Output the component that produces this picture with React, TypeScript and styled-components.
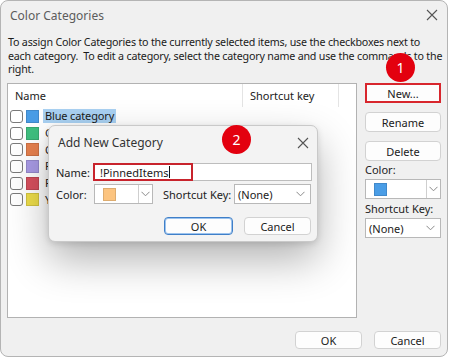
import React from 'react'
import styled, { createGlobalStyle } from 'styled-components'

const red = '#e3000f'
const ui = '"Noto Sans", "Open Sans", sans-serif'

const GlobalStyle = createGlobalStyle`
  html, body { margin: 0; padding: 0; background: #ffffff; }
  * { box-sizing: border-box; }
  body { font-family: ${ui}; font-size: 11px; color: #1b1b1b; }
`

const Window = styled.div`
  position: relative;
  width: 448px;
  height: 357px;
  border: 1px solid #b4b4b4;
  border-radius: 8px;
  background: #f0f0f0;
  display: flex;
  flex-direction: column;
  padding: 0 6px 7px 6px;
  overflow: hidden;
`
const TitleBar = styled.div`
  height: 30px;
  display: flex;
  align-items: center;
  justify-content: space-between;
  padding: 0 3px 2px 3px;
`
const Title = styled.span`
  font-size: 12px;
  color: #5c5c5c;
`
const Description = styled.p`
  margin: 5px 0 0 1px;
  line-height: 13.5px;
  height: 40.5px;
  white-space: pre;
  font-size: 10.7px;
  letter-spacing: -0.2px;
`
const Body = styled.div`
  margin-top: 6.5px;
  height: 235px;
  display: flex;
  gap: 8px;
`
const ListBox = styled.div`
  width: 350px;
  border: 1px solid #b2b2b2;
  background: #ffffff;
  display: flex;
  flex-direction: column;
`
const HeaderRow = styled.div`
  height: 23px;
  display: flex;
`
const HeaderCell = styled.div<{ $w?: number }>`
  width: ${p => (p.$w ? `${p.$w}px` : 'auto')};
  flex: ${p => (p.$w ? 'none' : '1')};
  padding-left: 7px;
  display: flex;
  align-items: center;
  border-right: ${p => (p.$w ? '1px solid #e4e4e4' : 'none')};
  color: #222;
`
const Rows = styled.div`
  padding: 1px 0 0 2px;
  display: flex;
  flex-direction: column;
`
const Row = styled.div`
  height: 16.7px;
  display: flex;
  align-items: center;
`
const Check = styled.span`
  width: 13px;
  height: 13px;
  border: 1px solid #7a7a7a;
  border-radius: 3px;
  background: #fff;
  margin-right: 3px;
`
const Swatch = styled.span<{ $c: string }>`
  width: 13px;
  height: 13px;
  background: ${p => p.$c};
  border: 1px solid rgba(0, 0, 0, 0.12);
  flex: none;
`
const RowLabel = styled.span<{ $selected?: boolean }>`
  margin-left: 4px;
  padding: 0 2px;
  height: 14px;
  line-height: 14px;
  letter-spacing: -0.15px;
  background: ${p => (p.$selected ? '#a9d1f2' : 'transparent')};
`
const Side = styled.div`
  width: 76px;
  display: flex;
  flex-direction: column;
`
const Button = styled.button<{ $w?: number; $h?: number; $mark?: boolean; $def?: boolean }>`
  width: ${p => (p.$w ? `${p.$w}px` : '100%')};
  height: ${p => p.$h || 20}px;
  padding: 0;
  font-family: ${ui};
  font-size: 11px;
  color: #1b1b1b;
  background: #fdfdfd;
  border: ${p => (p.$mark ? `2px solid #d8262d` : p.$def ? '1px solid #3f7fc8' : '1px solid #d2d2d2')};
  border-radius: ${p => (p.$mark ? '0' : '4px')};
  box-shadow: ${p => (p.$def ? 'inset 0 0 0 1px #9cc3ee' : 'none')};
  flex: none;
`
const SideGap = styled.div<{ $h: number }>`
  height: ${p => p.$h}px;
  flex: none;
`
const FieldLabel = styled.div<{ $h: number }>`
  height: ${p => p.$h}px;
  display: flex;
  align-items: flex-end;
  padding-bottom: 2px;
  color: #222;
  white-space: nowrap;
`
const Combo = styled.div<{ $w?: number; $h?: number }>`
  width: ${p => (p.$w ? `${p.$w}px` : '100%')};
  height: ${p => p.$h || 20}px;
  background: #fff;
  border: 1px solid #b8b8b8;
  display: flex;
  align-items: center;
  flex: none;
`
const ComboValue = styled.div<{ $pad: number }>`
  flex: 1;
  display: flex;
  align-items: center;
  padding-left: ${p => p.$pad}px;
  height: 100%;
`
const ComboArrow = styled.div<{ $split?: boolean }>`
  width: 14px;
  height: 100%;
  display: flex;
  align-items: center;
  justify-content: center;
  border-left: ${p => (p.$split ? '1px solid #cfcfcf' : 'none')};
  margin-right: ${p => (p.$split ? '0' : '3px')};
`
const Footer = styled.div`
  margin-top: 13px;
  display: flex;
  justify-content: flex-end;
  gap: 12px;
`
const Badge = styled.div<{ $x: number; $y: number }>`
  position: absolute;
  left: ${p => p.$x - 15}px;
  top: ${p => p.$y - 15}px;
  width: 29px;
  height: 29px;
  border-radius: 50%;
  background: ${red};
  color: #fff;
  font-size: 14px;
  display: flex;
  align-items: center;
  justify-content: center;
  z-index: 5;
`
const Dialog = styled.div`
  position: absolute;
  left: 47px;
  top: 124px;
  width: 270px;
  height: 117px;
  background: #f3f3f3;
  border: 1px solid #c9c9c9;
  border-radius: 7px;
  box-shadow: 0 18px 42px rgba(0, 0, 0, 0.3), 0 2px 6px rgba(0, 0, 0, 0.12);
  display: flex;
  flex-direction: column;
  z-index: 3;
`
const DialogTitle = styled.div`
  height: 33px;
  display: flex;
  align-items: center;
  justify-content: space-between;
  padding: 0 8px 0 9px;
  font-size: 12px;
  color: #333;
`
const DialogBody = styled.div`
  padding: 4px 5px 0 7px;
  display: flex;
  flex-direction: column;
  gap: 3px;
`
const FormRow = styled.div`
  display: flex;
  align-items: center;
`
const FormLabel = styled.span<{ $w: number; $pad?: number }>`
  width: ${p => p.$w}px;
  padding-left: ${p => p.$pad || 0}px;
  flex: none;
  white-space: nowrap;
  color: #222;
`
const TextBox = styled.div`
  position: relative;
  width: 219px;
  height: 18px;
  background: #fff;
  border: 1px solid #bdbdbd;
  display: flex;
  align-items: center;
  padding-left: 6px;
`
const Mark = styled.div`
  position: absolute;
  left: -1px;
  top: -1px;
  width: 100px;
  height: 18px;
  border: 2px solid #c8232c;
`
const Caret = styled.span`
  display: inline-block;
  width: 1px;
  height: 12px;
  background: #111;
  margin-left: 1px;
`
const DialogButtons = styled.div`
  margin-top: 10px;
  display: flex;
  justify-content: flex-end;
  gap: 11px;
  padding-right: 1px;
`

const Chevron = () => (
  <svg width="9" height="6" viewBox="0 0 9 6">
    <polyline points="0.5,0.8 4.5,4.8 8.5,0.8" fill="none" stroke="#8a8a8a" strokeWidth="1" />
  </svg>
)

const Close = ({ size }: { size: number }) => (
  <svg width={size} height={size} viewBox="0 0 12 12">
    <path d="M1 1 L11 11 M11 1 L1 11" stroke="#555" strokeWidth="1.1" />
  </svg>
)

const categories = [
  { name: 'Blue category', color: '#4a9de6' },
  { name: 'Green category', color: '#3fbf7f' },
  { name: 'Orange category', color: '#e6804e' },
  { name: 'Purple category', color: '#a99be6' },
  { name: 'Red category', color: '#d8505e' },
  { name: 'Yellow category', color: '#eede4a' },
]

export default function App() {
  return (
    <>
      <GlobalStyle />
      <Window>
        <TitleBar>
          <Title>Color Categories</Title>
          <Close size={12} />
        </TitleBar>
        <Description>
          {'To assign Color Categories to the currently selected items, use the checkboxes next to\neach category.  To edit a category, select the category name and use the commands to the\nright.'}
        </Description>
        <Body>
          <ListBox>
            <HeaderRow>
              <HeaderCell $w={235}>Name</HeaderCell>
              <HeaderCell $w={96}>Shortcut key</HeaderCell>
              <HeaderCell />
            </HeaderRow>
            <Rows>
              {categories.map((c, i) => (
                <Row key={c.name}>
                  <Check />
                  <Swatch $c={c.color} />
                  <RowLabel $selected={i === 0}>{c.name}</RowLabel>
                </Row>
              ))}
            </Rows>
          </ListBox>
          <Side>
            <Button $mark>New...</Button>
            <SideGap $h={9} />
            <Button>Rename</Button>
            <SideGap $h={9} />
            <Button>Delete</Button>
            <FieldLabel $h={18}>Color:</FieldLabel>
            <Combo>
              <ComboValue $pad={8}>
                <Swatch $c="#4a9de6" />
              </ComboValue>
              <ComboArrow $split>
                <Chevron />
              </ComboArrow>
            </Combo>
            <FieldLabel $h={19}>Shortcut Key:</FieldLabel>
            <Combo>
              <ComboValue $pad={3}>(None)</ComboValue>
              <ComboArrow>
                <Chevron />
              </ComboArrow>
            </Combo>
          </Side>
        </Body>
        <Footer>
          <Button $w={67} $h={18}>OK</Button>
          <Button $w={67} $h={18}>Cancel</Button>
        </Footer>

        <Dialog>
          <DialogTitle>
            <span>Add New Category</span>
            <Close size={12} />
          </DialogTitle>
          <DialogBody>
            <FormRow>
              <FormLabel $w={37}>Name:</FormLabel>
              <TextBox>
                !PinnedItems
                <Caret />
                <Mark />
              </TextBox>
            </FormRow>
            <FormRow>
              <FormLabel $w={38}>Color:</FormLabel>
              <Combo $w={59}>
                <ComboValue $pad={8}>
                  <Swatch $c="#fcc47f" />
                </ComboValue>
                <ComboArrow $split>
                  <Chevron />
                </ComboArrow>
              </Combo>
              <FormLabel $w={81} $pad={10}>Shortcut Key:</FormLabel>
              <Combo $w={77}>
                <ComboValue $pad={3}>(None)</ComboValue>
                <ComboArrow>
                  <Chevron />
                </ComboArrow>
              </Combo>
            </FormRow>
            <DialogButtons>
              <Button $w={69} $h={18} $def>OK</Button>
              <Button $w={67} $h={18}>Cancel</Button>
            </DialogButtons>
          </DialogBody>
        </Dialog>

        <Badge $x={400} $y={67}>1</Badge>
        <Badge $x={236} $y={139}>2</Badge>
      </Window>
    </>
  )
}
